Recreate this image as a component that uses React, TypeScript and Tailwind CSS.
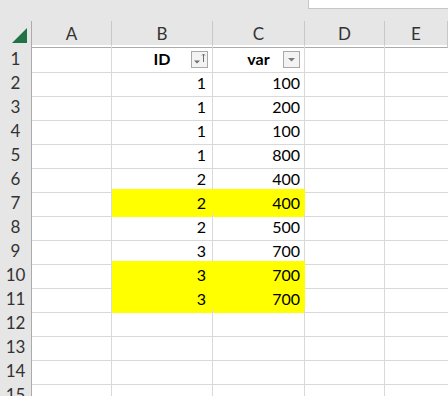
import React from 'react';

type Row = { id?: number; v?: number; hl?: boolean };

const rows: Row[] = [
  { id: 1, v: 100 },
  { id: 1, v: 200 },
  { id: 1, v: 100 },
  { id: 1, v: 800 },
  { id: 2, v: 400 },
  { id: 2, v: 400, hl: true },
  { id: 2, v: 500 },
  { id: 3, v: 700 },
  { id: 3, v: 700, hl: true },
  { id: 3, v: 700, hl: true },
  {},
  {},
  {},
  {},
];

const cols = ['A', 'B', 'C', 'D', 'E'];
const grid = 'grid grid-cols-[32px_80px_101px_92px_80px_1fr]';

function FilterButton({ sorted }: { sorted?: boolean }) {
  return (
    <div className="w-[17px] h-[17px] border border-[#a9a9a9] bg-[#f3f3f3] flex items-center justify-center">
      <svg width="15" height="15" viewBox="0 0 15 15">
        {sorted ? (
          <>
            <polygon points="2,8.5 8,8.5 5,11.5" fill="#6e6e6e" />
            <line x1="11.5" y1="2" x2="11.5" y2="10" stroke="#6e6e6e" strokeWidth="1" />
            <polyline points="10,3.5 11.5,2 13,3.5" fill="none" stroke="#6e6e6e" strokeWidth="1" />
          </>
        ) : (
          <polygon points="4,6 11,6 7.5,9.5" fill="#7a7a7a" />
        )}
      </svg>
    </div>
  );
}

export default function App() {
  return (
    <div
      className="w-[448px] h-[396px] overflow-hidden bg-white text-[16px] text-black"
      style={{ fontFamily: 'Lato, "Open Sans", sans-serif' }}
    >
      {/* formula bar edge */}
      <div className="h-[21px] bg-[#e6e6e6] flex justify-end">
        <div className="w-[140px] h-[9px] bg-white border-l border-b border-[#c6c6c6]" />
      </div>

      {/* column headers */}
      <div className={`${grid} h-[24px] bg-[#e6e6e6] text-[#333] text-[17px]`}>
        <div className="border-r border-b border-[#ababab] flex items-end justify-end pr-[4px] pb-[4px]">
          <svg width="15" height="15" viewBox="0 0 15 15">
            <polygon points="0,15 15,0 15,15" fill="#217346" />
          </svg>
        </div>
        {cols.map((c) => (
          <div
            key={c}
            className="border-r border-b border-r-[#c8c8c8] border-b-[#ababab] flex items-center justify-center"
          >
            {c}
          </div>
        ))}
      </div>

      {/* row 1: table headers */}
      <div className={`${grid} h-[24px]`}>
        <div className="bg-[#e6e6e6] text-[#333] text-[17px] border-r border-b border-r-[#ababab] border-b-[#d4d4d4] flex items-center justify-center pt-[1px]">
          1
        </div>
        <div className="border-r border-b border-[#d9d9d9]" />
        <div className="border-r border-b border-[#d9d9d9] flex items-end justify-end pr-[4px] pb-[4px] relative">
          <span className="absolute inset-0 flex items-center justify-center pt-[2px] font-bold">ID</span>
          <FilterButton sorted />
        </div>
        <div className="border-r border-b border-[#d9d9d9] flex items-end justify-end pr-[4px] pb-[4px] relative">
          <span className="absolute inset-0 flex items-center justify-center pt-[2px] font-bold">var</span>
          <FilterButton />
        </div>
        <div className="border-r border-b border-[#d9d9d9]" />
        <div className="border-b border-[#d9d9d9]" />
      </div>

      {rows.map((r, i) => {
        const cell = r.hl
          ? 'bg-[#ffff00] border-r border-b border-[#ffff00]'
          : 'border-r border-b border-[#d9d9d9]';
        return (
          <div key={i} className={`${grid} h-[24px]`}>
            <div className="bg-[#e6e6e6] text-[#333] text-[17px] border-r border-b border-r-[#ababab] border-b-[#d4d4d4] flex items-center justify-center pt-[1px]">
              {i + 2}
            </div>
            <div className="border-r border-b border-[#d9d9d9]" />
            <div className={`${cell} flex items-center justify-end pr-[6px] pt-[2px]`}>{r.id}</div>
            <div className={`${cell} flex items-center justify-end pr-[4px] pt-[2px]`}>{r.v}</div>
            <div className="border-r border-b border-[#d9d9d9]" />
            <div className="border-b border-[#d9d9d9]" />
          </div>
        );
      })}

      {/* row 15: selected */}
      <div className={`${grid} h-[24px]`}>
        <div className="bg-[#d2d2d2] text-[#217346] text-[17px] border-r-2 border-b border-r-[#217346] border-b-[#d4d4d4] flex items-center justify-center pt-[1px]">
          15
        </div>
        <div className="border-r border-b border-[#d9d9d9]" />
        <div className="border-r border-b border-[#d9d9d9]" />
        <div className="border-r border-b border-[#d9d9d9]" />
        <div className="border-r border-b border-[#d9d9d9]" />
        <div className="border-b border-[#d9d9d9]" />
      </div>
    </div>
  );
}
